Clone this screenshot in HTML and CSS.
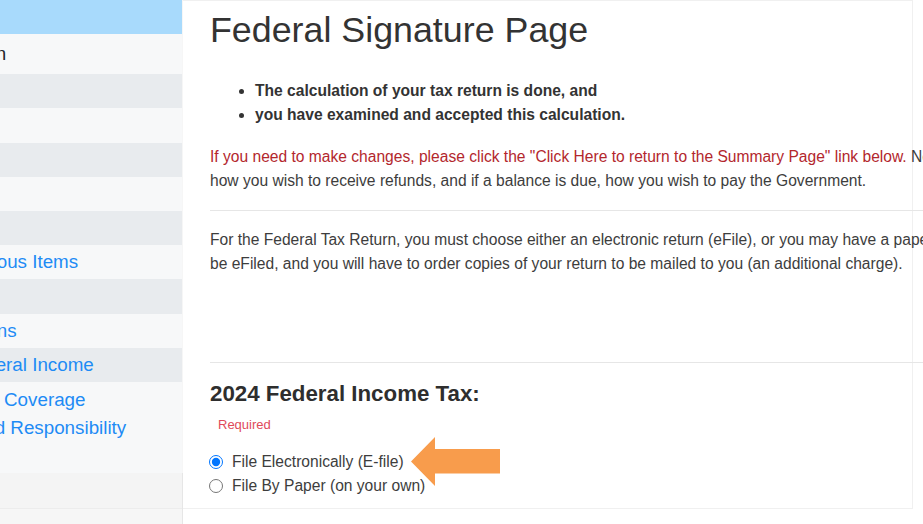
FILE: index.html
```html
<!DOCTYPE html>
<html lang="en">
<head>
<meta charset="utf-8">
<title>Federal Signature Page</title>
<link rel="stylesheet" href="styles.css">
</head>
<body>
<div class="page">
  <aside class="sidebar">
    <nav class="nav">
      <div class="nav-head">Federal</div>
      <div class="nav-item current">Introduction</div>
      <a class="nav-item alt" href="#">Income</a>
      <a class="nav-item" href="#">Credits</a>
      <a class="nav-item alt" href="#">Taxes</a>
      <a class="nav-item" href="#">Payments</a>
      <a class="nav-item alt" href="#">Penalties</a>
      <a class="nav-item" href="#">Miscellaneous Items</a>
      <a class="nav-item alt" href="#">Summary</a>
      <a class="nav-item" href="#">Sign Returns</a>
      <a class="nav-item alt" href="#">Gross Federal Income</a>
      <a class="nav-item multi" href="#">Healthcare Coverage<br>and Shared Responsibility<br>(ACA)</a>
    </nav>
    <div class="sidebar-rest">
      <div class="sidebar-foot"></div>
    </div>
  </aside>
  <main class="panel">
    <div class="content">
      <h1 class="title">Federal Signature Page</h1>
      <ul class="checklist">
        <li>The calculation of your tax return is done, and</li>
        <li>you have examined and accepted this calculation.</li>
      </ul>
      <p class="text"><span class="warn">If you need to make changes, please click the "Click Here to return to the Summary Page" link below.</span> Next, you will need to indicate<br>how you wish to receive refunds, and if a balance is due, how you wish to pay the Government.</p>
      <hr class="rule">
      <p class="text spaced">For the Federal Tax Return, you must choose either an electronic return (eFile), or you may have a paper return that cannot<br>be eFiled, and you will have to order copies of your return to be mailed to you (an additional charge).</p>
      <hr class="rule">
      <h2 class="section-title">2024 Federal Income Tax:</h2>
      <div class="required">Required</div>
      <div class="choices">
        <label class="choice"><input type="radio" name="file" checked> <span>File Electronically (E-file)</span></label>
        <label class="choice"><input type="radio" name="file"> <span>File By Paper (on your own)</span></label>
        <svg class="arrow" width="90" height="50" viewBox="0 0 90 50" aria-hidden="true">
          <polygon points="0,24.5 24,0 24,12 89,12 89,36.5 24,36.5 24,49" fill="#f89c4c"/>
        </svg>
      </div>
    </div>
  </main>
</div>
</body>
</html>
```
FILE: styles.css
```css
html, body {
  margin: 0;
  padding: 0;
}
body {
  width: 923px;
  height: 524px;
  overflow: hidden;
  background: #ffffff;
  font-family: "Liberation Sans", Arial, sans-serif;
}
.page {
  display: flex;
  height: 524px;
}
.sidebar {
  width: 183px;
  flex: 0 0 183px;
  display: flex;
  flex-direction: column;
  overflow: hidden;
  background: #f6f6f6;
}
.nav {
  display: flex;
  flex-direction: column;
  margin-left: -104px;
  width: 286px;
  font-size: 18.8px;
}
.nav-head {
  height: 34px;
  background: #a8dafc;
  padding-left: 12px;
  color: #a8dafc;
  line-height: 34px;
}
.nav-item {
  display: block;
  padding: 4px 12px;
  line-height: 26.2px;
  white-space: nowrap;
  color: #1e8bf5;
  text-decoration: none;
  background: #f7f8f9;
}
.nav-item.alt {
  background: #e8ebee;
}
.nav-item.current {
  color: #212529;
  padding: 7px 12px;
}
.nav-item.multi {
  line-height: 28px;
  padding: 4px 12px 3px;
}
.sidebar-rest {
  flex: 1;
  border-right: 1px solid #e6e6e6;
  background: #f6f6f6;
}
.sidebar-foot {
  height: 35px;
  background: #f4f4f4;
  border-bottom: 1px solid #ececec;
}
.panel {
  box-sizing: border-box;
  width: 730px;
  flex: 0 0 730px;
  height: 509px;
  border: 1px solid #f0f0f0;
  border-left: none;
  overflow: visible;
}
.content {
  width: 1000px;
  padding: 8px 0 0 27px;
  color: #3d3d3d;
  font-size: 15.6px;
  line-height: 24px;
}
.title {
  margin: 0 0 27px;
  font-size: 35.8px;
  line-height: 43px;
  font-weight: normal;
  color: #333333;
}
.checklist {
  margin: 0 0 18px;
  padding-left: 45px;
  font-weight: bold;
  color: #333333;
}
.text {
  margin: 0 0 17px;
}
.text.spaced {
  margin-bottom: 86px;
}
.warn {
  color: #b3272d;
}
.rule {
  margin: 0 0 17px;
  border: none;
  border-top: 1px solid #e6e6e6;
  height: 0;
}
.section-title {
  margin: 18px 0 0;
  font-size: 22.3px;
  line-height: 26.6px;
  font-weight: bold;
  color: #2e2e2e;
}
.required {
  margin: 7px 0 0 8px;
  font-size: 13px;
  line-height: 19.5px;
  color: #e04a5a;
}
.choices {
  position: relative;
  margin-top: 16px;
}
.choice {
  display: flex;
  align-items: center;
  gap: 9px;
  height: 24px;
}
.choice input {
  margin: 0 0 0 -1px;
  width: 14px;
  height: 14px;
}
.arrow {
  position: absolute;
  left: 201px;
  top: -13px;
}
```
